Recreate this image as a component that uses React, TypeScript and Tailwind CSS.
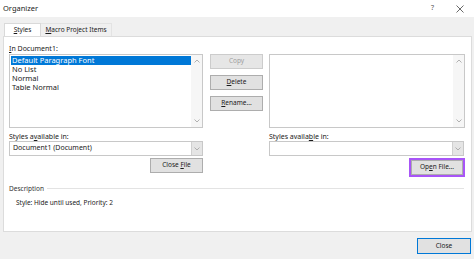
import React from "react";

const font = { fontFamily: '"Noto Sans", "Open Sans", Arial, sans-serif' };

// small chevron used in scroll bars and combo boxes
const Chevron: React.FC<{ up?: boolean }> = ({ up }) => (
  <svg width="6" height="4" viewBox="0 0 6 4" className="block">
    <path
      d={up ? "M0.5 3.5 L3 1 L5.5 3.5" : "M0.5 0.5 L3 3 L5.5 0.5"}
      fill="none"
      stroke="#a0a0a0"
      strokeWidth="0.8"
    />
  </svg>
);

const Btn: React.FC<{ children: React.ReactNode; disabled?: boolean; className?: string }> = ({
  children,
  disabled,
  className = "",
}) => (
  <div
    className={`flex items-center justify-center h-[15px] bg-[#e1e1e1] border border-[#adadad] text-[6.5px] leading-none ${
      disabled ? "text-[#a0a0a0] border-[#cccccc] bg-[#e6e6e6]" : "text-[#1a1a1a]"
    } ${className}`}
  >
    {children}
  </div>
);

const ListBox: React.FC<{ items?: string[]; selected?: number }> = ({ items = [], selected }) => (
  <div className="flex h-[74px] border border-[#c8c8c8] bg-white">
    <div className="flex-1 pt-[1px] pl-[1px]">
      {items.map((it, i) => (
        <div
          key={it}
          className={`h-[9px] pl-[1px] text-[7.5px] leading-[9px] ${
            i === selected ? "bg-[#0078d7] text-white" : "text-[#1a1a1a]"
          }`}
        >
          {it}
        </div>
      ))}
    </div>
    <div className="w-[11px] flex flex-col items-center justify-between py-[4px] bg-[#f6f6f6]">
      <Chevron up />
      <Chevron />
    </div>
  </div>
);

const Combo: React.FC<{ value?: string }> = ({ value = "" }) => (
  <div className="flex h-[15px] border border-[#c8c8c8] bg-white">
    <div className="flex-1 pl-[3px] flex items-center text-[7px] text-[#1a1a1a]">{value}</div>
    <div className="w-[11px] flex items-center justify-center bg-[#e5e5e5] border-l border-[#d0d0d0]">
      <Chevron />
    </div>
  </div>
);

export default function App() {
  return (
    <div className="w-[474px] h-[259px] bg-[#f0f0f0] overflow-hidden flex flex-col text-[#1a1a1a]" style={font}>
      {/* title bar */}
      <div className="h-[17px] bg-white flex items-center justify-between pl-[3px] pr-[10px]">
        <span className="text-[7.5px] text-[#222]">Organizer</span>
        <div className="flex items-center gap-[22px] text-[#555]">
          <span className="text-[7px]">?</span>
          <svg width="8" height="8" viewBox="0 0 8 8">
            <path d="M0.5 0.5 L7.5 7.5 M7.5 0.5 L0.5 7.5" stroke="#444" strokeWidth="0.8" />
          </svg>
        </div>
      </div>

      {/* tabs */}
      <div className="h-[19px] flex items-end pl-[4px]">
        <div className="h-[13px] w-[37px] bg-white border border-b-0 border-[#d9d9d9] flex items-center justify-center text-[6.5px]">
          <span>
            <u>S</u>tyles
          </span>
        </div>
        <div className="h-[13px] w-[71px] border border-l-0 border-b-0 border-[#e3e3e3] flex items-center justify-center text-[6.5px]">
          <span>
            <u>M</u>acro Project Items
          </span>
        </div>
      </div>

      {/* panel */}
      <div className="mx-[3px] mr-[2px] h-[196px] bg-white border border-[#dcdcdc] px-[5px] pt-[7px]">
        <div className="h-[9px] text-[7px] leading-[9px]">
          <u>I</u>n Document1:
        </div>
        <div className="mt-[1px] grid grid-cols-[194px_53px_195px] gap-x-[7px]">
          <div className="flex flex-col">
            <ListBox items={["Default Paragraph Font", "No List", "Normal", "Table Normal"]} selected={0} />
            <div className="mt-[4px] h-[9px] text-[7px] leading-[9px]">
              Styles a<u>v</u>ailable in:
            </div>
            <div className="mt-[0px]">
              <Combo value="Document1 (Document)" />
            </div>
            <div className="mt-[2px] flex justify-end">
              <Btn className="w-[53px]">
                <span>
                  Close <u>F</u>ile
                </span>
              </Btn>
            </div>
          </div>
          <div className="flex flex-col gap-[6px]">
            <Btn disabled>Copy</Btn>
            <Btn>
              <span>
                <u>D</u>elete
              </span>
            </Btn>
            <Btn>
              <span>
                <u>R</u>ename...
              </span>
            </Btn>
          </div>
          <div className="flex flex-col -ml-[1px]">
            <ListBox />
            <div className="mt-[4px] h-[9px] text-[7px] leading-[9px]">
              Styles availa<u>b</u>le in:
            </div>
            <div className="mt-[0px] mr-[1px]">
              <Combo />
            </div>
            <div className="mt-[2px] flex justify-end mr-[1px]">
              <div className="border-[2px] border-[#a855f7] -mx-[1px]">
                <Btn className="w-[52px] h-[15px]">
                  <span>
                    Op<u>e</u>n File...
                  </span>
                </Btn>
              </div>
            </div>
          </div>
        </div>

        {/* description */}
        <div className="mt-[7px] flex items-center gap-[3px] pr-[2px]">
          <span className="text-[6.5px] leading-[9px] text-[#333]">Description</span>
          <div className="flex-1 h-px bg-[#e3e3e3]" />
        </div>
        <div className="mt-[5px] pl-[7px] text-[6.5px] leading-[9px]">Style: Hide until used, Priority: 2</div>
      </div>

      {/* bottom */}
      <div className="flex justify-end pr-[3px] pt-[6px]">
        <div className="w-[54px] h-[16px] bg-[#e1e1e1] border border-[#0078d7] flex items-center justify-center text-[6.5px]">
          Close
        </div>
      </div>
    </div>
  );
}
